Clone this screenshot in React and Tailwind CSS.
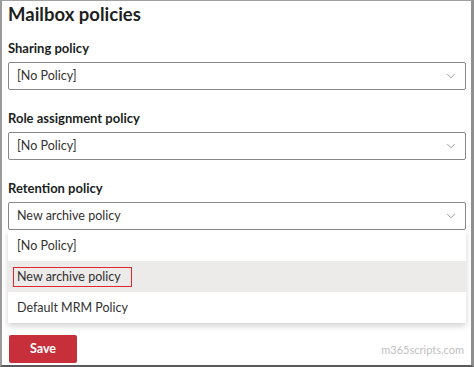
import { ChevronDown } from "lucide-react";

const OPTIONS = ["[No Policy]", "New archive policy", "Default MRM Policy"];

function SelectBox({ value }) {
  return (
    <div className="flex h-[28px] items-center justify-between rounded-[2px] border border-[#8a8886] bg-white pl-[8px] pr-[7px]">
      <span className="text-[12.5px] text-[#323130]">{value}</span>
      <ChevronDown size={14} strokeWidth={1.25} className="text-[#7a7876]" />
    </div>
  );
}

function Field({ label, value, className = "" }) {
  return (
    <div className={className}>
      <div className="mb-[4px] text-[13px] font-bold leading-[20px] text-[#201f1e]">{label}</div>
      <SelectBox value={value} />
    </div>
  );
}

export default function App() {
  return (
    <div
      className="relative h-[367px] w-[474px] overflow-hidden border-t border-l-2 border-r-[3px] border-b-2 border-t-[#a0a0a0] border-l-[#9a9a9a] border-r-[#8f8f8f] border-b-[#5a5a5a] bg-white"
      style={{ fontFamily: 'Lato, "Open Sans", sans-serif' }}
    >
      <div className="pl-[6px] pr-[5px]">
        <h1 className="text-[18.5px] font-bold leading-[26px] text-[#201f1e]">Mailbox policies</h1>

        <Field label="Sharing policy" value="[No Policy]" className="mt-[11px]" />
        <Field label="Role assignment policy" value="[No Policy]" className="mt-[18px]" />
        <Field label="Retention policy" value="New archive policy" className="mt-[18px]" />

        <div className="shadow-[0_3px_6px_rgba(0,0,0,0.18)]">
          {OPTIONS.map((opt, i) => (
            <div
              key={opt}
              className={[
                "flex h-[31px] items-center",
                i === 1 ? "bg-[#edebe9]" : "bg-white",
              ].join(" ")}
            >
              <span
                className={[
                  "ml-[5px] h-[20px] pl-[3px] pr-[10px] text-[12.5px] leading-[18px] text-[#323130]",
                  i === 1 ? "border border-[#e0262e]" : "border border-transparent",
                ].join(" ")}
              >
                {opt}
              </span>
            </div>
          ))}
        </div>

        <div className="mt-[12px] flex items-end justify-between">
          <button
            type="button"
            className="ml-[1px] h-[28px] w-[68px] rounded-[2px] bg-[#c7303b] text-[12.5px] font-bold text-white"
          >
            Save
          </button>
          <span className="mb-[5px] mr-[2px] text-[11px] text-[#c0c0c0]">m365scripts.com</span>
        </div>
      </div>
    </div>
  );
}
